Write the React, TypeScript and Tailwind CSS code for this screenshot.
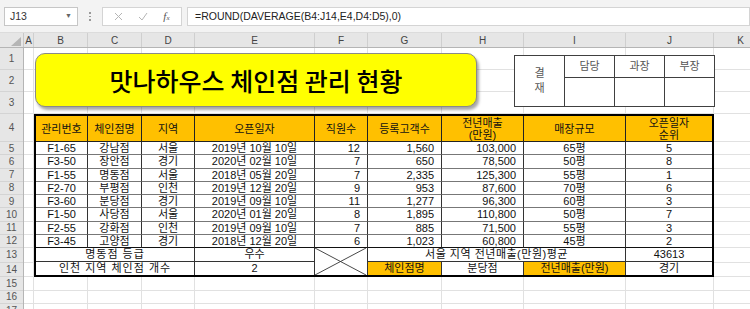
import React from "react";

// 열 머리글 (A~K)
const sheetCols = [
  { l: "A", w: "w-[10px]" },
  { l: "B", w: "w-[54px]" },
  { l: "C", w: "w-[54px]" },
  { l: "D", w: "w-[53px]" },
  { l: "E", w: "w-[120px]" },
  { l: "F", w: "w-[53px]" },
  { l: "G", w: "w-[74px]" },
  { l: "H", w: "w-[82px]" },
  { l: "I", w: "w-[102px]" },
  { l: "J", w: "w-[88px]" },
  { l: "K", w: "w-[54px]" },
];

// 행 높이
const rowHeights = [
  "h-[22px]", "h-[22px]", "h-[22px]", "h-[28px]",
  "h-[13.25px]", "h-[13.25px]", "h-[13.25px]", "h-[13.25px]",
  "h-[13.25px]", "h-[13.25px]", "h-[13.25px]", "h-[13.25px]",
  "h-[14.5px]", "h-[14.5px]", "h-[13.5px]", "h-[13.5px]", "h-[13.5px]",
];

// 표 안쪽 열 너비 (B~J)
const tableCols = [
  "w-[52px]", "w-[54px]", "w-[53px]", "w-[120px]", "w-[53px]",
  "w-[74px]", "w-[82px]", "w-[102px]", "w-[86px]",
];

const align = [
  "justify-center", "justify-center", "justify-center", "justify-center",
  "justify-end pr-[7px]", "justify-end pr-[7px]", "justify-end pr-[7px]",
  "justify-center", "justify-center",
];

const headers = [
  "관리번호", "체인점명", "지역", "오픈일자", "직원수", "등록고객수",
  "전년매출\n(만원)", "매장규모", "오픈일자\n순위",
];

const rows = [
  ["F1-65", "강남점", "서울", "2019년 10월 10일", "12", "1,560", "103,000", "65평", "5"],
  ["F3-50", "장안점", "경기", "2020년 02월 10일", "7", "650", "78,500", "50평", "8"],
  ["F1-55", "명동점", "서울", "2018년 05월 20일", "7", "2,335", "125,300", "55평", "1"],
  ["F2-70", "부평점", "인천", "2019년 12월 20일", "9", "953", "87,600", "70평", "6"],
  ["F3-60", "분당점", "경기", "2019년 09월 10일", "11", "1,277", "96,300", "60평", "3"],
  ["F1-50", "사당점", "서울", "2020년 01월 20일", "8", "1,895", "110,800", "50평", "7"],
  ["F2-55", "강화점", "인천", "2019년 09월 10일", "7", "885", "71,500", "55평", "3"],
  ["F3-45", "고양점", "경기", "2018년 12월 20일", "6", "1,023", "60,800", "45평", "2"],
];

function GridRow({ h }: { h: string }) {
  return (
    <div className={`flex ${h}`}>
      {sheetCols.map((c) => (
        <div key={c.l} className={`${c.w} shrink-0 border-r border-b border-[#e1e1e1]`} />
      ))}
    </div>
  );
}

function Toolbar() {
  return (
    <div className="h-[33px] bg-[#f3f3f3] flex items-start pt-[7px] pl-[4px] border-b border-[#dcdcdc]">
      <div className="w-[74px] h-[19px] bg-white border border-[#c6c6c6] flex items-center justify-between pl-[5px] pr-[5px]">
        <span className="text-[10.5px] text-[#333]">J13</span>
        <span className="text-[7px] text-[#666]">▼</span>
      </div>
      <div className="w-[24px] h-[19px] flex flex-col items-center justify-center gap-[2px]">
        <span className="w-[1.5px] h-[1.5px] bg-[#999]" />
        <span className="w-[1.5px] h-[1.5px] bg-[#999]" />
        <span className="w-[1.5px] h-[1.5px] bg-[#999]" />
      </div>
      <div className="w-[80px] h-[19px] bg-white border border-[#d4d4d4] flex items-center justify-around px-[4px]">
        <svg width="9" height="9" viewBox="0 0 9 9" className="text-[#b5b5b5]">
          <path d="M1 1L8 8M8 1L1 8" stroke="currentColor" strokeWidth="1" />
        </svg>
        <svg width="10" height="9" viewBox="0 0 10 9" className="text-[#b5b5b5]">
          <path d="M1 5L4 8L9 1" stroke="currentColor" strokeWidth="1" fill="none" />
        </svg>
        <span className="[font-family:'Liberation_Serif',serif] italic text-[11px] text-[#555] leading-none">
          f<span className="text-[7px]">x</span>
        </span>
      </div>
      <div className="flex-1 ml-[5px] h-[19px] bg-white border border-[#d4d4d4] flex items-center pl-[7px]">
        <span className="text-[10.5px] text-[#222]">=ROUND(DAVERAGE(B4:J14,E4,D4:D5),0)</span>
      </div>
    </div>
  );
}

function ColumnHeader() {
  return (
    <div className="flex h-[15px] bg-[#e6e6e6] border-b border-[#b5b5b5]">
      <div className="w-[24px] shrink-0 border-r border-[#c8c8c8] relative">
        <svg width="10" height="9" viewBox="0 0 10 9" className="absolute right-[2px] bottom-[1px]">
          <path d="M10 0L10 9L0 9Z" fill="#b5b5b5" />
        </svg>
      </div>
      {sheetCols.map((c) => (
        <div
          key={c.l}
          className={`${c.w} shrink-0 border-r border-[#cfcfcf] text-center text-[10px] leading-[15px] text-[#444]`}
        >
          {c.l}
        </div>
      ))}
    </div>
  );
}

function RowHeader() {
  return (
    <div className="w-[24px] shrink-0 bg-[#e6e6e6] border-r border-[#b5b5b5]">
      {rowHeights.map((h, i) => (
        <div
          key={i}
          className={`${h} flex items-center justify-center border-b border-[#d4d4d4] text-[10px] text-[#555]`}
        >
          {i + 1}
        </div>
      ))}
    </div>
  );
}

function SideCells({ w }: { w: string }) {
  return (
    <div className={`${w} shrink-0`}>
      {rowHeights.slice(3, 14).map((h, i) => (
        <div key={i} className={`${h} border-r border-b border-[#e1e1e1]`} />
      ))}
    </div>
  );
}

function DataTable() {
  return (
    <div className="w-[680px] shrink-0 border-2 border-black flex flex-col text-[11px] text-[#111]">
      {/* 머리글 행 */}
      <div className="flex h-[26px] bg-[#ffc000]">
        {headers.map((t, i) => (
          <div
            key={i}
            className={`${tableCols[i]} shrink-0 flex items-center justify-center text-center whitespace-pre leading-[12px] border-b border-[#222] ${i < 8 ? "border-r" : ""}`}
          >
            {t}
          </div>
        ))}
      </div>

      {/* 데이터 행 */}
      {rows.map((r, ri) => (
        <div key={ri} className="flex h-[13.25px]">
          {r.map((v, ci) => (
            <div
              key={ci}
              className={`${tableCols[ci]} ${align[ci]} shrink-0 flex items-center leading-[12px] border-b ${ri === 7 ? "border-[#111]" : "border-[#777]"} ${ci < 8 ? "border-r border-r-[#333]" : ""}`}
            >
              {v}
            </div>
          ))}
        </div>
      ))}

      {/* 13~14행 */}
      <div className="flex h-[27px]">
        <div className="w-[279px] shrink-0 flex flex-col">
          <div className="flex h-[13.5px] border-b border-[#333]">
            <div className="w-[159px] flex items-center justify-center border-r border-[#333] leading-[12px] tracking-[1px]">명동점 등급</div>
            <div className="w-[120px] flex items-center justify-center border-r border-[#333] leading-[12px]">우수</div>
          </div>
          <div className="flex h-[13.5px]">
            <div className="w-[159px] flex items-center justify-center border-r border-[#333] leading-[12px] tracking-[1px]">인천 지역 체인점 개수</div>
            <div className="w-[120px] flex items-center justify-center border-r border-[#333] leading-[12px]">2</div>
          </div>
        </div>
        <div className="w-[53px] shrink-0 border-r border-[#333]">
          <svg className="w-full h-full" viewBox="0 0 53 27" preserveAspectRatio="none">
            <path d="M0 0L52 27M52 0L0 27" stroke="#333" strokeWidth="0.9" />
          </svg>
        </div>
        <div className="w-[344px] shrink-0 flex flex-col">
          <div className="flex h-[13.5px] border-b border-[#333]">
            <div className="w-[258px] flex items-center justify-center border-r border-[#333] leading-[12px] tracking-[0.5px]">서울 지역 전년매출(만원)평균</div>
            <div className="w-[86px] flex items-center justify-center leading-[12px]">43613</div>
          </div>
          <div className="flex h-[13.5px]">
            <div className="w-[74px] flex items-center justify-center bg-[#ffc000] border-r border-[#333] leading-[12px]">체인점명</div>
            <div className="w-[82px] flex items-center justify-center border-r border-[#333] leading-[12px]">분당점</div>
            <div className="w-[102px] flex items-center justify-center bg-[#ffc000] border-r border-[#333] leading-[12px]">전년매출(만원)</div>
            <div className="w-[86px] flex items-center justify-center leading-[12px]">경기</div>
          </div>
        </div>
      </div>
    </div>
  );
}

export default function App() {
  return (
    <div className="w-[750px] h-[309px] overflow-hidden bg-white [font-family:'Liberation_Sans','Noto_Sans_CJK_KR',sans-serif]">
      <Toolbar />
      <ColumnHeader />
      <div className="flex">
        <RowHeader />
        <div className="flex-1 relative overflow-hidden">
          <GridRow h="h-[22px]" />
          <GridRow h="h-[22px]" />
          <GridRow h="h-[22px]" />

          <div className="flex">
            <SideCells w="w-[10px]" />
            <DataTable />
            <SideCells w="w-[54px]" />
          </div>

          <GridRow h="h-[13.5px]" />
          <GridRow h="h-[13.5px]" />
          <GridRow h="h-[13.5px]" />

          {/* 제목 도형 */}
          <div className="absolute left-[11px] top-[5px] w-[442px] h-[54px] rounded-[10px] border border-[#8a8a8a] bg-[#ffff00] shadow-[2px_3px_3px_rgba(0,0,0,0.35)] flex items-center justify-center">
            <span className="[font-family:'Noto_Sans_CJK_KR',sans-serif] text-[25px] font-medium text-black leading-none">
              맛나하우스 체인점 관리 현황
            </span>
          </div>

          {/* 결재란 그림 */}
          <div className="absolute left-[490px] top-[7px] w-[201px] h-[52px] bg-white border border-[#404040] flex text-[11px] text-[#555]">
            <div className="w-[50px] border-r border-[#404040] flex flex-col items-center justify-center leading-[15px]">
              <span>결</span>
              <span>재</span>
            </div>
            <div className="flex-1 flex flex-col">
              <div className="h-[22px] flex border-b border-[#404040]">
                <div className="w-[50px] flex items-center justify-center border-r border-[#404040]">담당</div>
                <div className="w-[50px] flex items-center justify-center border-r border-[#404040]">과장</div>
                <div className="flex-1 flex items-center justify-center">부장</div>
              </div>
              <div className="flex-1 flex">
                <div className="w-[50px] border-r border-[#404040]" />
                <div className="w-[50px] border-r border-[#404040]" />
                <div className="flex-1" />
              </div>
            </div>
          </div>
        </div>
      </div>
    </div>
  );
}
